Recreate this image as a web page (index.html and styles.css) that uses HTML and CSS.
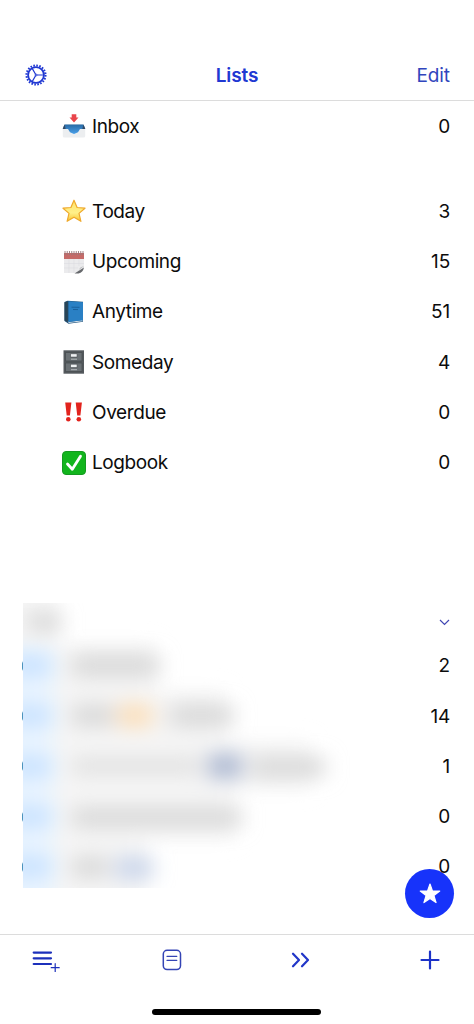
FILE: index.html
```html
<!DOCTYPE html>
<html lang="en">
<head>
<meta charset="utf-8">
<title>Lists</title>
<link rel="stylesheet" href="styles.css">
</head>
<body>
<div class="app">
  <header class="topbar">
    <svg class="gear" width="24" height="24" viewBox="0 0 24 24" fill="none" stroke="#2038d2">
      <circle cx="12" cy="12" r="9.5" stroke-width="2.100" stroke-dasharray="1.600 1.384"/>
      <circle cx="12" cy="12" r="7.900" stroke-width="1.800"/>
      <path d="M12.600 12H19.500M11.700 11.500L8.200 5.400M11.700 12.500L8.200 18.600" stroke-width="1.200"/>
      <circle cx="12" cy="12" r="1" stroke-width=".8"/>
    </svg>
    <h1 class="title">Lists</h1>
    <a class="edit">Edit</a>
  </header>

  <main class="content">
    <div class="row">
      <svg class="icon" width="24" height="24" viewBox="0 0 24 24">
        <defs><linearGradient id="tray" x2="0" y2="1"><stop offset="0" stop-color="#286aa5"/><stop offset="1" stop-color="#4aa0ea"/></linearGradient></defs>
        <path d="M3 10L.8 15v7q0 1.500 1.500 1.500h19.400q1.500 0 1.500-1.500v-7L21 10z" fill="#eceef0"/>
        <path d="M2.500 10.500H21.500L23.300 15H18l-2 3.300-4 1.700-4-1.700L6 15H.7z" fill="url(#tray)"/>
        <path d="M.7 15L2.500 10.500l1.200 4.500zM23.300 15L21.500 10.500l-1.200 4.500z" fill="#334a64"/>
        <path d="M9.700 .3h4.600v3.200h2.200L12 8.500 7.500 3.500h2.200z" fill="#e9454b"/>
      </svg>
      <span class="name">Inbox</span><span class="count">0</span>
    </div>

    <section class="group">
      <div class="row">
        <svg class="icon" width="24" height="24" viewBox="0 0 24 24">
          <defs><linearGradient id="gold" x2="0" y2="1"><stop offset="0" stop-color="#ffe36b"/><stop offset=".6" stop-color="#fff08a"/><stop offset="1" stop-color="#f9c531"/></linearGradient></defs>
          <path d="M12 1.200l3.100 7.300 7.900.7-6 5.200 1.900 7.900L12 18.200l-6.900 4.100L7 14.400 1 9.200l7.900-.7z" fill="url(#gold)" stroke="#efa92c" stroke-width="1.200" stroke-linejoin="round"/>
        </svg>
        <span class="name">Today</span><span class="count">3</span>
      </div>
      <div class="row">
        <svg class="icon" width="24" height="24" viewBox="1 0 22 24">
          <path d="M2 4h20v14l-6 5H2z" fill="#ebebed"/>
          <path d="M2 3h20v6H2z" fill="#c56a68"/>
          <path d="M3 1v4M5.250 1v4M7.500 1v4M9.750 1v4M12 1v4M14.250 1v4M16.500 1v4M18.750 1v4M21 1v4" stroke="#99777a" stroke-width=".9"/>
          <path d="M2 13.500h20M2 18h14M7 9v14M12 9v14M17 9v7" stroke="#dcdce0" stroke-width=".6"/>
          <path d="M22 17.500L12.500 23.500h4q4.500-1 5.500-6z" fill="#66686c"/>
          <path d="M22 16q-4.500 1-5 4L13 23z" fill="#b9babd"/>
        </svg>
        <span class="name">Upcoming</span><span class="count">15</span>
      </div>
      <div class="row">
        <svg class="icon" width="24" height="24" viewBox="0 0 24 24">
          <path d="M2.500 2L5.500 .7 21 1.800v20L6.500 23.700 2.500 21z" fill="#21557f"/>
          <path d="M5 20.500l2 1.600L20.500 20v1.200L6.800 23z" fill="#d8e2ea"/>
          <path d="M6.500 1.300L21 2.300v18L6.500 22z" fill="#2a80c4"/>
          <path d="M2.500 2.200l3.300-.9v21L2.500 20.500z" fill="#294456"/>
          <path d="M9.500 7.200l8 .1M11 9.500l5 .1" stroke="#195c96" stroke-width=".9"/>
        </svg>
        <span class="name">Anytime</span><span class="count">51</span>
      </div>
      <div class="row">
        <svg class="icon" width="24" height="24" viewBox="0 0 24 24">
          <path d="M1.500 .3h20.500v23.400H1.500z" fill="#54595d"/>
          <path d="M3.500 2.500h16.500v8.500H3.500zM3.500 13h16.500v8.500H3.500z" fill="#6b7175" stroke="#464a4e" stroke-width=".7"/>
          <path d="M8.500 3.700h6.600v3.400H8.500zM8.500 14.200h6.600v3.400H8.500z" fill="#eef1f2" stroke="#3f4346" stroke-width=".6"/>
          <path d="M9 9.200h6M9 19.700h6" stroke="#b3b7b9" stroke-width="1"/>
        </svg>
        <span class="name">Someday</span><span class="count">4</span>
      </div>
      <div class="row">
        <svg class="icon" width="24" height="24" viewBox="0 0 24 24" fill="#e2231d">
          <path d="M3.200 2.500h6.200L7.900 15.500H4.700zM13.700 2.500h6.200L18.400 15.500h-3.200z"/>
          <circle cx="6.300" cy="19.200" r="2.300"/><circle cx="16.800" cy="19.200" r="2.300"/>
        </svg>
        <span class="name">Overdue</span><span class="count">0</span>
      </div>
      <div class="row">
        <svg class="icon" width="24" height="24" viewBox="0 0 24 24">
          <rect x=".5" y=".5" width="23" height="23" rx="3.500" fill="#12b51d" stroke="#149a20"/>
          <path d="M5.500 13l4.800 5.300L18.500 5.200" fill="none" stroke="#fff" stroke-width="2.800" stroke-linecap="round" stroke-linejoin="round"/>
        </svg>
        <span class="name">Logbook</span><span class="count">0</span>
      </div>
    </section>

    <section class="private">
      <svg class="smudges" width="400" height="285" viewBox="23 603 400 285">
        <defs>
          <filter id="soft" filterUnits="userSpaceOnUse" x="-20" y="550" width="460" height="400"><feGaussianBlur stdDeviation="10.500 9.500"/></filter>
          <filter id="haze" filterUnits="userSpaceOnUse" x="-20" y="550" width="460" height="400"><feGaussianBlur stdDeviation="10"/></filter>
        </defs>
        <g filter="url(#haze)">
          <path d="M0 590H58V645H155V692H225V742H310V788H235V838H145V920H0z" fill="#f5f5f5"/>
          <path d="M0 648H53V920H0z" fill="#e9f4ff"/>
        </g>
        <g filter="url(#soft)" fill="#dadada">
          <rect x="28" y="612" width="32" height="20"/>
          <rect x="72" y="654" width="86" height="23"/>
          <rect x="72" y="704" width="42" height="23"/>
          <rect x="118" y="703" width="34" height="25" fill="#fbe0bd"/>
          <rect x="170" y="704" width="62" height="23"/>
          <rect x="72" y="757" width="128" height="18" fill="#e2e2e2"/>
          <rect x="208" y="753" width="34" height="26" fill="#b0bbd3"/>
          <rect x="252" y="756" width="72" height="22"/>
          <rect x="72" y="807" width="168" height="21"/>
          <rect x="72" y="856" width="36" height="22"/>
          <rect x="116" y="856" width="36" height="24" fill="#ccd7eb"/>
          <g fill="#cae3ff">
            <rect x="12" y="654" width="38" height="23"/><rect x="12" y="704" width="38" height="23"/>
            <rect x="12" y="755" width="38" height="23"/><rect x="12" y="805" width="38" height="23"/>
            <rect x="12" y="855" width="38" height="23"/>
          </g>
        </g>
      </svg>
      <div class="private-head">
        <svg width="11" height="7" viewBox="0 0 11 7" fill="none" stroke="#4147b4" stroke-width="1.200"><path d="M1 1l4.500 4.500L10 1"/></svg>
      </div>
      <div class="row"><i class="ring"></i><span class="count">2</span></div>
      <div class="row"><i class="ring"></i><span class="count">14</span></div>
      <div class="row"><i class="ring"></i><span class="count">1</span></div>
      <div class="row"><i class="ring"></i><span class="count">0</span></div>
      <div class="row"><i class="ring"></i><span class="count">0</span></div>
    </section>
    <button class="fab" aria-label="Favorites">
      <svg width="24" height="24" viewBox="0 0 24 24" fill="#fff" stroke="#fff" stroke-width="1.200" stroke-linejoin="round"><path d="M12 2l2.450 6.900 7.300.2-5.800 4.450 2.100 7L12 16.400l-6.050 4.150 2.100-7L2.250 9.100l7.300-.2z"/></svg>
    </button>
  </main>

  <nav class="toolbar">
    <svg width="28" height="24" viewBox="0 0 28 24" fill="none" stroke="#1c30bb" stroke-linecap="round">
      <path d="M1.700 4.600H19M1.700 10.300H19M1.700 16H19" stroke-width="2.200"/>
      <path d="M19.200 19.700h8M23.200 15.700v8" stroke-width="1.200"/>
    </svg>
    <svg class="note" width="20" height="22" viewBox="0 0 20 22" fill="none" stroke="#3444b5" stroke-width="1.500" stroke-linecap="round">
      <rect x="1.300" y="1.300" width="17.200" height="19.200" rx="3.800"/>
      <path d="M5 7.300h9.800M5 11.300h9.800" stroke-width="1.300"/>
    </svg>
    <svg class="jump" width="20" height="18" viewBox="0 0 20 18" fill="none" stroke="#2136c8" stroke-width="2.200" stroke-linecap="round" stroke-linejoin="round"><path d="M2 2.700L8 9 2 15.300M11 2.700L17 9 11 15.300"/></svg>
    <svg class="add" width="20" height="20" viewBox="0 0 20 20" fill="none" stroke="#1c32c8" stroke-width="2.200" stroke-linecap="round"><path d="M1.500 10h17M10 1.500v17"/></svg>
  </nav>
  <div class="home"><div class="home-bar"></div></div>
</div>
</body>
</html>
```
FILE: styles.css
```css
* { box-sizing: border-box; }
body {
  margin: 0;
  background: #fff;
  color: #0c0c0c;
  font-family: Inter, Roboto, sans-serif;
  font-size: 19px;
}
.app {
  width: 474px;
  height: 1024px;
  display: flex;
  flex-direction: column;
  overflow: hidden;
}
.topbar {
  height: 101px;
  padding: 50px 24px 0 24px;
  border-bottom: 1px solid #dcdcdc;
  display: grid;
  grid-template-columns: 1fr auto 1fr;
  align-items: center;
  color: #2038d2;
}
.title { margin: 0; font-size: 19px; font-weight: 600; letter-spacing: -0.1px; }
.edit { justify-self: end; color: #3045bd; letter-spacing: -0.1px; }
.content { flex: 1; position: relative; }
.row {
  height: 50.25px;
  padding: 0 24px 0 61.500px;
  display: flex;
  align-items: center;
  gap: 6.500px;
}
.icon { flex: none; }
.name { letter-spacing: -0.4px; }
.count {
  position: relative;
  z-index: 1;
  margin-left: auto;
  letter-spacing: -0.2px;
}
.group { padding-top: 35px; }
.private { position: relative; margin-top: 115px; }
.smudges { position: absolute; left: 23px; top: 0; }
.private-head {
  height: 38px;
  padding: 1px 24px 0 0;
  display: flex;
  align-items: center;
  justify-content: flex-end;
}
.private .row { padding-left: 21.500px; }
.ring {
  width: 3px;
  height: 10px;
  border: 1.500px solid #4a93bd;
  border-right: 0;
  border-radius: 5px 0 0 5px;
}
.fab {
  position: absolute;
  right: 20px;
  bottom: 16px;
  width: 49px;
  height: 49px;
  padding: 0;
  border: 0;
  border-radius: 50%;
  background: #1733fa;
  display: grid;
  place-items: center;
}
.toolbar {
  height: 53px;
  padding: 0 34px 2px 32px;
  border-top: 1px solid #dcdcdc;
  display: flex;
  align-items: center;
}
.note { margin-left: 102px; }
.jump { margin-left: 109px; }
.add { margin-left: auto; }
.home { height: 37px; padding-top: 22px; }
.home-bar {
  width: 169px;
  height: 6px;
  margin-left: 152px;
  border-radius: 3px;
  background: #000;
}
```
